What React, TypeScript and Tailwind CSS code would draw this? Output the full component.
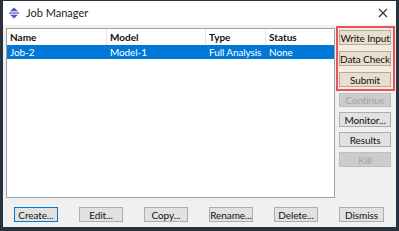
import React from 'react';

// Abaqus-style "Job Manager" dialog

const font = { fontFamily: 'Lato, "Noto Sans", sans-serif' };

type BtnProps = {
  label: string;
  tone?: 'normal' | 'marked' | 'disabled' | 'default';
  className?: string;
};

const Btn: React.FC<BtnProps> = ({ label, tone = 'normal', className = '' }) => {
  const tones: Record<string, string> = {
    normal: 'bg-[#e1e1e1] border-[#adadad] text-[#111]',
    marked: 'bg-[#e9ddcc] border-[#b5aa9c] text-[#111]',
    disabled: 'bg-[#cccccc] border-[#bfbfbf] text-[#a3a3a3]',
    default: 'bg-[#e1e1e1] border-[#0078d7] text-[#111]',
  };
  return (
    <div
      className={`flex items-center justify-center border whitespace-nowrap text-[10px] tracking-[-0.1px] leading-none ${tones[tone]} ${className}`}
    >
      {label}
    </div>
  );
};

const columns = [
  { name: 'Name', w: 'w-[100px]' },
  { name: 'Model', w: 'w-[99px]' },
  { name: 'Type', w: 'w-[60px]' },
  { name: 'Status', w: 'flex-1' },
];

const rows = [['Job-2', 'Model-1', 'Full Analysis', 'None']];

export default function App() {
  return (
    <div className="w-[399px] h-[231px] bg-[#27323e] pt-[1px] pl-[3px] pr-[3px] pb-[4px]" style={font}>
      <div className="h-full flex flex-col bg-[#f0f0f0]">
        {/* title bar */}
        <div className="h-[24px] bg-white flex items-center pl-[5px] pr-[8px] shrink-0">
          <svg width="12" height="12" viewBox="0 0 12 12" className="shrink-0">
            <path d="M6 0.5 L10 4.2 H2 Z" fill="#5b55b8" />
            <rect x="1" y="5.2" width="10" height="1.6" fill="#7c7cc8" />
            <path d="M6 11.5 L10 7.8 H2 Z" fill="#5b55b8" />
          </svg>
          <span className="ml-[6px] text-[11px] text-[#222]">Job Manager</span>
          <svg width="10" height="10" viewBox="0 0 10 10" className="ml-auto">
            <path d="M1 1 L9 9 M9 1 L1 9" stroke="#333" strokeWidth="1.1" />
          </svg>
        </div>

        {/* body */}
        <div className="flex-1 flex flex-col pl-[3px] pt-[3px]">
          <div className="flex">
            {/* table */}
            <div className="w-[330px] h-[170px] bg-white border border-[#a0a0a0] flex flex-col">
              <div className="flex h-[16px] shrink-0">
                {columns.map((c, i) => (
                  <div
                    key={c.name}
                    className={`${c.w} flex items-center pl-[3px] whitespace-nowrap text-[10px] font-bold text-[#111] ${i < 3 ? 'border-r border-[#e5e5e5]' : ''}`}
                  >
                    {c.name}
                  </div>
                ))}
              </div>
              {rows.map((r, ri) => (
                <div key={ri} className="flex h-[14px] bg-[#0078d7] text-white">
                  {r.map((cell, i) => (
                    <div key={i} className={`${columns[i].w} flex items-center pl-[3px] whitespace-nowrap text-[10px] tracking-[-0.1px]`}>
                      {cell}
                    </div>
                  ))}
                </div>
              ))}
            </div>

            {/* right-hand buttons */}
            <div className="flex-1 flex flex-col">
              <div className="ml-[1px] mr-[1px] -mt-[2px] border-2 border-[#e8545a] bg-[#f5ebe3] flex flex-col gap-[6px] pl-[1px] pr-[2px] pt-[2px] pb-[2px]">
                <Btn label="Write Input" tone="marked" className="h-[15px]" />
                <Btn label="Data Check" tone="marked" className="h-[15px]" />
                <Btn label="Submit" tone="marked" className="h-[15px]" />
              </div>
              <div className="flex flex-col gap-[5px] pl-[4px] pr-[5px] pt-[2px]">
                <Btn label="Continue" tone="disabled" className="h-[14px]" />
                <Btn label="Monitor..." className="h-[15px]" />
                <Btn label="Results" className="h-[15px]" />
                <Btn label="Kill" tone="disabled" className="h-[15px]" />
              </div>
            </div>
          </div>

          {/* bottom buttons */}
          <div className="flex gap-[21px] pl-[8px] mt-[9px]">
            <Btn label="Create..." tone="default" className="w-[44px] h-[15px]" />
            <Btn label="Edit..." className="w-[44px] h-[15px]" />
            <Btn label="Copy..." className="w-[44px] h-[15px]" />
            <Btn label="Rename..." className="w-[44px] h-[15px]" />
            <Btn label="Delete..." className="w-[44px] h-[15px]" />
            <Btn label="Dismiss" className="w-[45px] h-[15px]" />
          </div>
        </div>
      </div>
    </div>
  );
}
